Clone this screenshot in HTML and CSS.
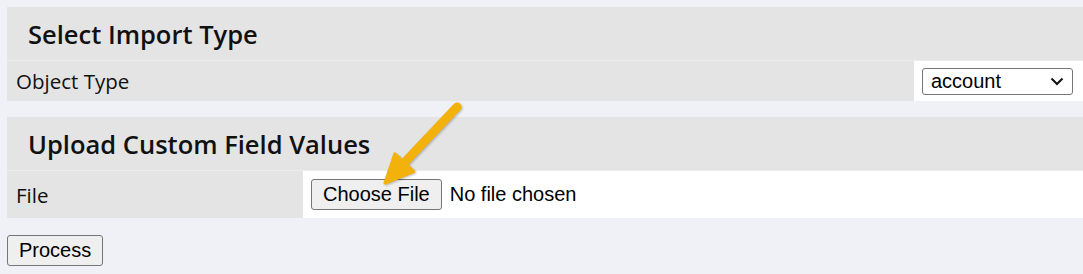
FILE: index.html
```html
<!DOCTYPE html>
<html lang="en">
  <head>
    <meta charset="UTF-8" />
    <title>Import</title>
    <link rel="stylesheet" href="styles.css">
  </head>
  <body>
    <form class="import-form" method="post">
      <table class="section">
        <tr>
          <th colspan="2">Select Import Type</th>
        </tr>
        <tr>
          <td class="label">Object Type</td>
          <td class="value value-right">
            <span class="select-wrap">
              <select name="objtype">
                <option>account</option>
                <option>contact</option>
              </select>
              <svg class="chevron" width="14" height="9" viewBox="0 0 14 9">
                <path d="M1.5 1.5 L7 7 L12.5 1.5" stroke="#111" stroke-width="2" fill="none" />
              </svg>
            </span>
          </td>
        </tr>
      </table>

      <table class="section section-file">
        <tr>
          <th colspan="2">Upload Custom Field Values</th>
        </tr>
        <tr>
          <td class="label label-file">File</td>
          <td class="value">
            <input type="file" name="upload" />
          </td>
        </tr>
      </table>

      <button type="submit" class="process">Process</button>

      <svg class="arrow" width="95" height="100" viewBox="0 0 95 100">
        <path d="M82 15 L29 71" stroke="#f3b20b" stroke-width="9" stroke-linecap="round" fill="none" />
        <path d="M10 91 L19.9 61.8 L38.7 79.6 Z" fill="#f3b20b" stroke="#f3b20b" stroke-width="3" stroke-linejoin="round" />
      </svg>
    </form>
  </body>
</html>
```

FILE: styles.css
```css
body {
  margin: 7px 0 0 7px;
  background: #f0f1f6;
  font-family: "Open Sans", "Noto Sans", sans-serif;
  color: #111;
}

.import-form {
  position: relative;
}

.section {
  width: 1076px;
  border-collapse: collapse;
  margin-bottom: 16px;
}

.section th {
  background: #e4e4e4;
  text-align: left;
  font-size: 25.5px;
  font-weight: 600;
  height: 53px;
  padding: 0 0 0 21px;
  border-bottom: 1px solid #ececec;
}

.section td {
  height: 40px;
  padding: 0;
}

.label {
  background: #e4e4e4;
  font-size: 20.5px;
  padding-left: 9px !important;
}

.label-file {
  width: 287px;
}

.value {
  background: #fff;
  padding-left: 8px !important;
}

.section-file td {
  height: 47px;
}

.value-right {
  width: 161px;
}

.select-wrap {
  position: relative;
  display: inline-block;
}

select {
  appearance: none;
  font-family: "Liberation Sans", Arial, sans-serif;
  font-size: 20px;
  width: 151px;
  height: 27px;
  padding: 0 0 0 8px;
  border: 1px solid #767676;
  border-radius: 3px;
  background: #fff;
  color: #000;
  vertical-align: middle;
}

.chevron {
  position: absolute;
  right: 9px;
  top: 9px;
  pointer-events: none;
}

input[type="file"] {
  font-family: "Liberation Sans", Arial, sans-serif;
  font-size: 20px;
  color: #000;
}

input[type="file"]::file-selector-button {
  font-family: "Liberation Sans", Arial, sans-serif;
  font-size: 20px;
  height: 31px;
  padding: 0 11px;
  margin-right: 8px;
  border: 1px solid #767676;
  border-radius: 3px;
  background: #efefef;
}

.process {
  font-family: "Liberation Sans", Arial, sans-serif;
  font-size: 20px;
  height: 31px;
  padding: 0 11px;
  border: 1px solid #767676;
  border-radius: 3px;
  background: #efefef;
  color: #000;
  margin-top: 1px;
}

.arrow {
  position: absolute;
  left: 368px;
  top: 85px;
  filter: drop-shadow(1px 1px 1px rgba(0, 0, 0, 0.25));
}
```
